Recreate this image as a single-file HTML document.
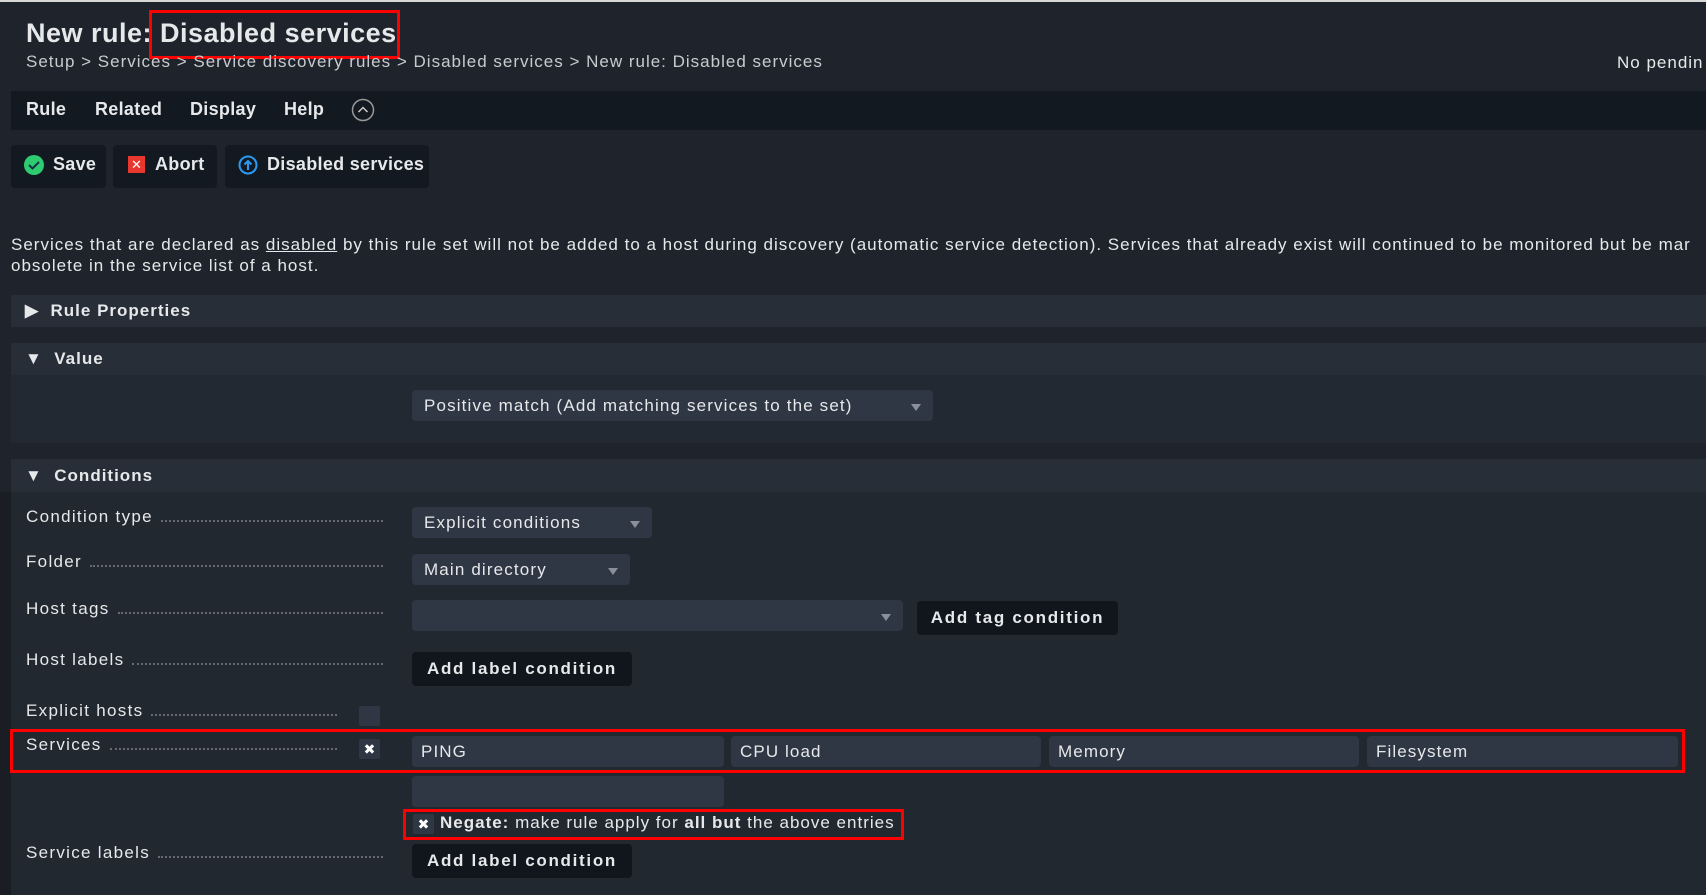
<!DOCTYPE html>
<html><head><meta charset="utf-8"><style>
*{box-sizing:border-box;margin:0;padding:0}
body{width:1706px;height:895px;background:#1f242c;color:#e6e8ea;font-family:"Liberation Sans",sans-serif;position:relative;overflow:hidden;border-top:2px solid #d8d8d8;letter-spacing:1px}
.a{position:absolute;white-space:nowrap}
.hdr{position:absolute;left:11px;right:0;background:#272e38;font-weight:bold;font-size:17px;letter-spacing:1px;padding-left:14px}
.sel{position:absolute;background:#2f3744;border-radius:4px;font-size:17px;padding-left:12px;line-height:31px;letter-spacing:1.15px}
.sel:after{content:"";position:absolute;right:12px;top:14px;border:5px solid transparent;border-top:7px solid #8a9099}
.inp{position:absolute;background:#2f3744;border-radius:4px;font-size:17px;padding-left:9px;line-height:31px;height:31px;letter-spacing:1.1px}
.btn{position:absolute;background:#11161c;border-radius:4px;font-weight:bold;font-size:17px;letter-spacing:1.7px;text-align:center;line-height:34px;height:34px}
.lbl{position:absolute;left:26px;font-size:17px;width:357px;display:flex;align-items:baseline;letter-spacing:1.3px}
.lbl i{flex:1;border-bottom:2px dotted #666b72;margin-left:8px;height:1px}
.cb{position:absolute;width:21px;height:20px;background:#2f3744;border-radius:2px;color:#fff;font-size:14px;text-align:center;line-height:20px;letter-spacing:0}
.red{position:absolute;border:3px solid #f00}
</style></head><body>
<div class="a" style="left:26px;top:16px;font-size:27px;font-weight:bold;letter-spacing:.5px">New rule: Disabled services</div>
<div class="red" style="left:149px;top:8px;width:251px;height:49px"></div>
<div class="a" style="left:26px;top:50px;font-size:17px;color:#c8cbce">Setup &gt; Services &gt; Service discovery rules &gt; Disabled services &gt; New rule: Disabled services</div>
<div class="a" style="left:1617px;top:51px;font-size:17px">No pendin</div>
<div class="a" style="left:11px;top:89px;right:0;height:39px;background:#131920"></div>
<div class="a" style="left:26px;top:97px;font-size:18px;font-weight:bold;letter-spacing:.3px">Rule</div>
<div class="a" style="left:95px;top:97px;font-size:18px;font-weight:bold;letter-spacing:.3px">Related</div>
<div class="a" style="left:190px;top:97px;font-size:18px;font-weight:bold;letter-spacing:.3px">Display</div>
<div class="a" style="left:284px;top:97px;font-size:18px;font-weight:bold;letter-spacing:.3px">Help</div>
<svg class="a" style="left:351px;top:96px" width="24" height="24"><circle cx="12" cy="12" r="10.5" fill="none" stroke="#999" stroke-width="1.5"/><path d="M7.5 14l4.5-4.5 4.5 4.5" fill="none" stroke="#ccc" stroke-width="1.5"/></svg>
<div class="a" style="left:11px;top:143px;width:95px;height:43px;background:#131920;border-radius:4px"></div>
<svg class="a" style="left:23px;top:152px" width="22" height="22"><circle cx="11" cy="11" r="10" fill="#2ecc71"/><path d="M6 11l3.5 3.5L16 8" fill="none" stroke="#134" stroke-width="2"/></svg>
<div class="a" style="left:53px;top:152px;font-size:18px;font-weight:bold;letter-spacing:.3px">Save</div>
<div class="a" style="left:113px;top:143px;width:104px;height:43px;background:#131920;border-radius:4px"></div>
<div class="a" style="left:128px;top:154px;width:17px;height:17px;background:#e8372f;color:#fff;font-size:13px;text-align:center;line-height:17px;letter-spacing:0">✕</div>
<div class="a" style="left:155px;top:152px;font-size:18px;font-weight:bold;letter-spacing:.3px">Abort</div>
<div class="a" style="left:225px;top:143px;width:204px;height:43px;background:#131920;border-radius:4px"></div>
<svg class="a" style="left:238px;top:153px" width="20" height="20"><circle cx="10" cy="10" r="8.5" fill="none" stroke="#2a9bf4" stroke-width="2"/><path d="M10 15V6M6.5 9.5L10 6l3.5 3.5" fill="none" stroke="#2a9bf4" stroke-width="2"/></svg>
<div class="a" style="left:267px;top:152px;font-size:18px;font-weight:bold;letter-spacing:.3px">Disabled services</div>
<div class="a" style="left:11px;top:232px;font-size:17px;line-height:21px">Services that are declared as <u>disabled</u> by this rule set will not be added to a host during discovery (automatic service detection). Services that already exist will continued to be monitored but be mar<br>obsolete in the service list of a host.</div>
<div class="hdr" style="top:293px;height:32px;line-height:32px">▶&nbsp; Rule Properties</div>
<div class="hdr" style="top:341px;height:32px;line-height:32px">▼&nbsp; Value</div>
<div class="a" style="left:11px;right:0;top:373px;height:68px;background:#232932"></div>
<div class="sel" style="left:412px;top:388px;width:521px;height:31px">Positive match (Add matching services to the set)</div>
<div class="hdr" style="top:457px;height:33px;line-height:33px">▼&nbsp; Conditions</div>
<div class="a" style="left:0;top:490px;width:11px;bottom:0;background:#1a1e24"></div>
<div class="a" style="left:11px;right:0;top:490px;bottom:0;background:#222830"></div>
<div class="lbl" style="top:505px">Condition type<i></i></div>
<div class="sel" style="left:412px;top:505px;width:240px;height:31px">Explicit conditions</div>
<div class="lbl" style="top:550px">Folder<i></i></div>
<div class="sel" style="left:412px;top:552px;width:218px;height:31px">Main directory</div>
<div class="lbl" style="top:597px">Host tags<i></i></div>
<div class="sel" style="left:412px;top:598px;width:491px;height:31px"></div>
<div class="btn" style="left:917px;top:599px;width:201px">Add tag condition</div>
<div class="lbl" style="top:648px">Host labels<i></i></div>
<div class="btn" style="left:412px;top:650px;width:220px">Add label condition</div>
<div class="lbl" style="top:699px;width:311px">Explicit hosts<i></i></div>
<div class="cb" style="left:359px;top:704px"></div>
<div class="lbl" style="top:733px;width:311px">Services<i></i></div>
<div class="cb" style="left:359px;top:737px">✖</div>
<div class="inp" style="left:412px;top:734px;width:312px">PING</div>
<div class="inp" style="left:731px;top:734px;width:310px">CPU load</div>
<div class="inp" style="left:1049px;top:734px;width:310px">Memory</div>
<div class="inp" style="left:1367px;top:734px;width:311px">Filesystem</div>
<div class="red" style="left:10px;top:727px;width:1675px;height:44px"></div>
<div class="inp" style="left:412px;top:774px;width:312px"></div>
<div class="cb" style="left:413px;top:812px">✖</div>
<div class="a" style="left:440px;top:811px;font-size:17px"><b>Negate:</b> make rule apply for <b>all but</b> the above entries</div>
<div class="red" style="left:403px;top:807px;width:501px;height:31px"></div>
<div class="lbl" style="top:841px">Service labels<i></i></div>
<div class="btn" style="left:412px;top:842px;width:220px">Add label condition</div>
</body></html>
